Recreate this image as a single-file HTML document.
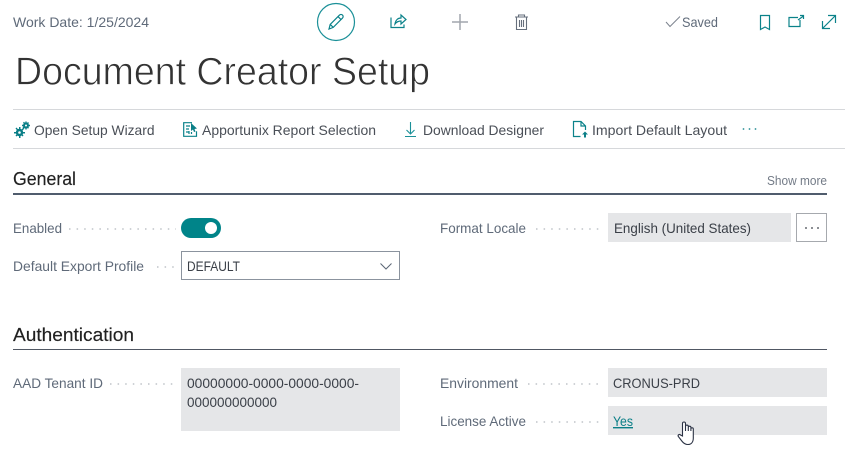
<!DOCTYPE html>
<html><head><meta charset="utf-8"><style>
html,body{margin:0;padding:0;background:#fff;width:851px;height:475px;overflow:hidden}
svg{display:block;font-family:"Liberation Sans",sans-serif}
.l{font-size:14px;fill:#5f6a79}
.v{font-size:14px;fill:#3a3f47}
.t{font-size:14px;fill:#4a4f57}
.h{font-size:18px;fill:#212121;stroke:#212121;stroke-width:.15}
.d{stroke:#bfc3c8;stroke-width:1.500;stroke-dasharray:1.500 6.100;fill:none}
.i{fill:none;stroke:#0b828a;stroke-width:1.2}
</style></head><body>
<svg width="851" height="475" viewBox="0 0 851 475" xmlns="http://www.w3.org/2000/svg">
<rect width="851" height="475" fill="#fff"/>
<text x="13" y="27" class="l" textLength="136" lengthAdjust="spacingAndGlyphs">Work Date: 1/25/2024</text>
<circle cx="336" cy="22" r="18.5" fill="none" stroke="#1b9098" stroke-width="1.2"/>
<path class="i" d="M329 29l1.2-4.6 9.3-9.3a1.9 1.9 0 0 1 3 3l-9.3 9.3zM330.2 24.4l3 2.9M338 16.6l3 3"/>
<path class="i" d="M391 17.500v10h13v-3M395 24c.5-4 3-6 6-6v-3l5 4.500-5 4.500v-3c-2.500 0-4.500 1-6 3z" stroke-width="1.100"/>
<path d="M452 22h16M460 14v16" stroke="#a2a6ad" stroke-width="1.500" fill="none"/>
<path d="M515 17h13M518.500 17v-2h6v2M516.500 17v12.500h10V17M519.500 20v7M521.500 20v7M523.500 20v7" stroke="#666f7c" stroke-width="1.100" fill="none"/>
<path d="M666 22l4 4.500 10-10" stroke="#7c838e" stroke-width="1" fill="none"/>
<text x="682" y="27" class="l" textLength="36" lengthAdjust="spacingAndGlyphs">Saved</text>
<path class="i" d="M760.500 15.500h9v14l-4.500-2.500-4.500 2.500z"/>
<path class="i" d="M800 20v6.500h-11v-9h9M798 20l5.500-4M800 15.500h3.500v3.500"/>
<path class="i" d="M822.500 28.500l13-13M828 15.500h7.500V23M822.500 21v7.500H830"/>
<text x="15" y="84.500" font-size="39" fill="#333" stroke="#fff" stroke-width=".7" textLength="415" lengthAdjust="spacingAndGlyphs">Document Creator Setup</text>
<rect x="13" y="109" width="832" height="1" fill="#d6d8db"/>
<rect x="13" y="148" width="832" height="1" fill="#d6d8db"/>
<g fill="#0b7f87">
<circle cx="19.500" cy="132.500" r="3.700"/><circle cx="26" cy="125.500" r="3"/>
<path d="M19 127h1.500v11H19zM14 132h11v1.500H14zM15.500 128.500l1-1 7 8-1 1zM23.500 127.500l1 1-8 8-1-1z"/>
<path d="M25.300 121.500h1.400v8h-1.400zM22 124.800h8v1.400h-8zM23 122.800l1-1 5 6-1 1zM28 122l1 1-5.500 5.500-1-1z"/>
</g>
<circle cx="19.500" cy="132.500" r="1.300" fill="#fff"/><circle cx="26" cy="125.500" r="1" fill="#fff"/>
<path class="i" d="M192 122.700h-8.300v13.600h12.800v-5M186 126h4M186 129h3M186 132h3M189 134v-3M191.500 134v-2" stroke-width="1.300"/>
<path d="M191 123l6 5.500-2.500.5 1 2.500-1.500.5-1-2.500-2 1.500z" fill="#0b7f87"/>
<text x="34" y="135" class="t" textLength="120.500" lengthAdjust="spacingAndGlyphs">Open Setup Wizard</text>
<text x="202" y="135" class="t" textLength="174" lengthAdjust="spacingAndGlyphs">Apportunix Report Selection</text>
<path d="M410.500 122v12M406.500 130l4 4 4-4M405 136.500h11" stroke="#1b9098" stroke-width="1.100" fill="none"/>
<text x="423" y="135" class="t" textLength="121" lengthAdjust="spacingAndGlyphs">Download Designer</text>
<path class="i" d="M580.500 136.500h-7v-15h7.500l4.500 4.500v4M581 121.500v4.500h4.500" stroke-width="1.200"/>
<path d="M585 131.500l-3 3h2v3h2v-3h2z" fill="#0b7f87"/>
<text x="592" y="135" class="t" textLength="135" lengthAdjust="spacingAndGlyphs">Import Default Layout</text>
<g fill="#2a8f96"><circle cx="743.500" cy="129" r=".9"/><circle cx="749.500" cy="129" r=".9"/><circle cx="755.500" cy="129" r=".9"/></g>
<text x="13" y="185" class="h" textLength="63" lengthAdjust="spacingAndGlyphs">General</text>
<text x="767" y="185" font-size="12.500" fill="#737b87" textLength="60" lengthAdjust="spacingAndGlyphs">Show more</text>
<rect x="13" y="193" width="814" height="2" fill="#505c6d"/>
<text x="13" y="233" class="l" textLength="49" lengthAdjust="spacingAndGlyphs">Enabled</text>
<path class="d" d="M69 229H176"/>
<rect x="181" y="218" width="40" height="20" rx="10" fill="#008489"/>
<circle cx="211" cy="228" r="6" fill="#fff"/>
<text x="13" y="271" class="l" textLength="131" lengthAdjust="spacingAndGlyphs">Default Export Profile</text>
<path class="d" d="M157 267H176"/>
<rect x="181.500" y="251.500" width="218" height="28" fill="#fff" stroke="#8b939e"/>
<text x="187" y="271" class="v" textLength="53" lengthAdjust="spacingAndGlyphs">DEFAULT</text>
<path d="M380.500 263.500l5.500 5.500 5.500-5.500" stroke="#5b6675" fill="none"/>
<text x="440" y="233" class="l" textLength="86" lengthAdjust="spacingAndGlyphs">Format Locale</text>
<path class="d" d="M536 229H601"/>
<rect x="608" y="213" width="183" height="29" fill="#e5e6e8"/>
<text x="614" y="233" class="v" textLength="137" lengthAdjust="spacingAndGlyphs">English (United States)</text>
<rect x="796.500" y="213.500" width="30" height="28" fill="#fff" stroke="#a6a9ae"/>
<g fill="#3a3f47"><circle cx="806" cy="228" r=".9"/><circle cx="812" cy="228" r=".9"/><circle cx="818" cy="228" r=".9"/></g>
<text x="13" y="341" class="h" textLength="121" lengthAdjust="spacingAndGlyphs">Authentication</text>
<rect x="13" y="349" width="814" height="1" fill="#505763"/>
<text x="13" y="388" class="l" textLength="90" lengthAdjust="spacingAndGlyphs">AAD Tenant ID</text>
<path class="d" d="M110 384H176"/>
<rect x="181" y="368" width="219" height="63" fill="#e5e6e8"/>
<text x="187" y="388" class="v" textLength="172" lengthAdjust="spacingAndGlyphs">00000000-0000-0000-0000-</text>
<text x="187" y="407" class="v" textLength="90" lengthAdjust="spacingAndGlyphs">000000000000</text>
<text x="440" y="388" class="l" textLength="78" lengthAdjust="spacingAndGlyphs">Environment</text>
<path class="d" d="M528 384H601"/>
<rect x="608" y="368" width="219" height="29" fill="#e5e6e8"/>
<text x="613" y="388" class="v" textLength="87" lengthAdjust="spacingAndGlyphs">CRONUS-PRD</text>
<text x="440" y="426" class="l" textLength="86" lengthAdjust="spacingAndGlyphs">License Active</text>
<path class="d" d="M536 422H601"/>
<rect x="608" y="406" width="219" height="29" fill="#e5e6e8"/>
<text x="613" y="426" font-size="14" fill="#0b7f87" textLength="20" lengthAdjust="spacingAndGlyphs" text-decoration="underline">Yes</text>
<path d="M682.500 436v-12.500a1.500 1.500 0 0 1 3 0V431v-4.500a1.400 1.400 0 0 1 2.800 0V431v-3.500a1.300 1.300 0 0 1 2.600 0V431v-2a1.200 1.200 0 0 1 2.400 0v9c0 4-2 6.500-5.500 6.500-3 0-4.500-1.500-6-3.500l-3.500-4.500c-.8-1.500 1-2.700 2.200-1.500z" fill="#fff" stroke="#2b3244" stroke-width="1.100"/>
</svg>
</body></html>
